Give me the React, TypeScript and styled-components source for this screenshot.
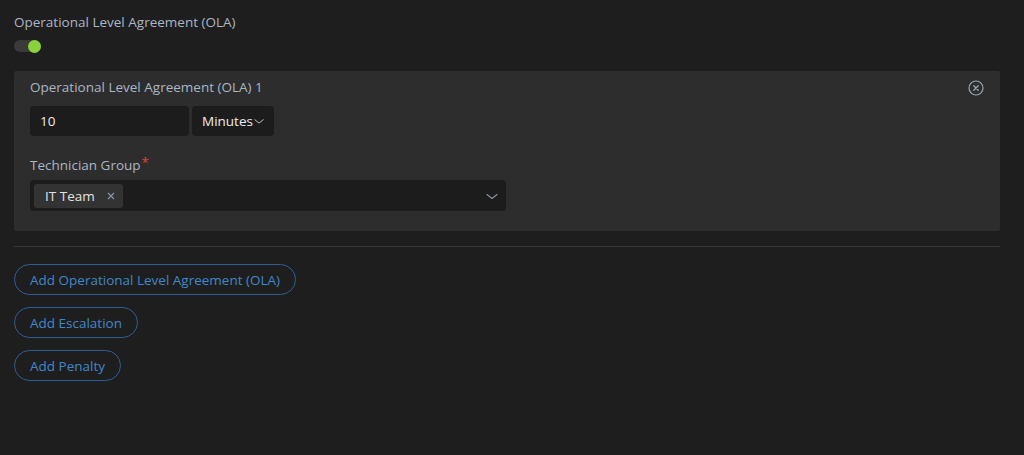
import React from 'react'
import styled, { createGlobalStyle } from 'styled-components'

const GlobalStyle = createGlobalStyle`
  html, body {
    margin: 0;
    padding: 0;
    background: #1e1e1e;
  }
  body {
    font-family: "Open Sans", "Liberation Sans", sans-serif;
    font-size: 13.5px;
  }
`

const Page = styled.div`
  width: 1024px;
  height: 455px;
  box-sizing: border-box;
  padding: 13px 24px 0 14px;
  background: #1e1e1e;
  display: flex;
  flex-direction: column;
`

const Label = styled.div`
  color: #aab6c6;
  font-size: 13.5px;
  line-height: 19px;
`

const Toggle = styled.div<{ on?: boolean }>`
  margin-top: 8px;
  width: 27px;
  height: 12px;
  border-radius: 7px;
  background: #3a3a3a;
  position: relative;
  &::after {
    content: '';
    position: absolute;
    top: -0.5px;
    right: 0;
    width: 13px;
    height: 13px;
    border-radius: 50%;
    background: #8bd13c;
  }
`

const Panel = styled.div`
  margin-top: 19px;
  background: #2d2d2d;
  border-radius: 2px;
  padding: 7px 16px 20px 16px;
  display: flex;
  flex-direction: column;
  position: relative;
`

const CloseButton = styled.button`
  position: absolute;
  top: 8px;
  right: 15px;
  width: 18px;
  height: 18px;
  padding: 0;
  border: none;
  background: transparent;
  display: flex;
  align-items: center;
  justify-content: center;
`

const Row = styled.div`
  display: flex;
  gap: 3px;
  margin-top: 9px;
`

const Field = styled.div<{ width: number }>`
  width: ${p => p.width}px;
  height: 30px;
  box-sizing: border-box;
  background: #1c1c1c;
  border-radius: 4px;
  display: flex;
  align-items: center;
  padding: 0 10px;
  color: #ececec;
  font-size: 13.5px;
  gap: 1px;
`

const FieldGroup = styled.div`
  margin-top: 20px;
  display: flex;
  flex-direction: column;
`

const Required = styled.span`
  color: #e0443a;
  margin-left: 1px;
  position: relative;
  top: -3px;
`

const MultiSelect = styled.div`
  margin-top: 5px;
  width: 476px;
  height: 31px;
  box-sizing: border-box;
  background: #1c1c1c;
  border-radius: 4px;
  display: flex;
  align-items: center;
  padding: 0 8px 0 4px;
  justify-content: space-between;
`

const Tag = styled.div`
  height: 24px;
  box-sizing: border-box;
  background: #333333;
  border-radius: 3px;
  display: flex;
  align-items: center;
  padding: 0 8px 0 11px;
  gap: 12px;
  color: #e2e2e2;
  font-size: 13.5px;
`

const Divider = styled.hr`
  margin: 15px 0 17px 0;
  border: none;
  border-top: 1px solid #363636;
  width: 986px;
`

const Actions = styled.div`
  display: flex;
  flex-direction: column;
  align-items: flex-start;
  gap: 12px;
`

const OutlineButton = styled.button`
  height: 31px;
  box-sizing: border-box;
  border: 1px solid #2d5f96;
  border-radius: 16px;
  background: transparent;
  color: #3f88cc;
  font-family: inherit;
  font-size: 13.5px;
  padding: 0 15px;
  cursor: pointer;
`

const Chevron = ({ size = 12, color = '#cfcfcf' }: { size?: number; color?: string }) => (
  <svg width={size} height={size} viewBox="0 0 12 12" fill="none">
    <path d="M1 4.5 L6 8.5 L11 4.5" stroke={color} strokeWidth="1.1" strokeLinecap="round" strokeLinejoin="round" />
  </svg>
)

const App = () => {
  return (
    <Page>
      <GlobalStyle />
      <Label>Operational Level Agreement (OLA)</Label>
      <Toggle on />
      <Panel>
        <CloseButton aria-label="remove">
          <svg width="16" height="16" viewBox="0 0 16 16" fill="none">
            <circle cx="8" cy="8" r="7" stroke="#9aa6b4" strokeWidth="1.2" />
            <path d="M5.8 5.8 L10.2 10.2 M10.2 5.8 L5.8 10.2" stroke="#9aa6b4" strokeWidth="1.4" strokeLinecap="round" />
          </svg>
        </CloseButton>
        <Label>Operational Level Agreement (OLA) 1</Label>
        <Row>
          <Field width={159}>10</Field>
          <Field width={82}>
            Minutes
            <Chevron />
          </Field>
        </Row>
        <FieldGroup>
          <Label>
            Technician Group<Required>*</Required>
          </Label>
          <MultiSelect>
            <Tag>
              IT Team
              <svg width="8" height="8" viewBox="0 0 8 8">
                <path d="M1 1 L7 7 M7 1 L1 7" stroke="#8a95a3" strokeWidth="1.2" />
              </svg>
            </Tag>
            <Chevron color="#8a95a3" />
          </MultiSelect>
        </FieldGroup>
      </Panel>
      <Divider />
      <Actions>
        <OutlineButton>Add Operational Level Agreement (OLA)</OutlineButton>
        <OutlineButton>Add Escalation</OutlineButton>
        <OutlineButton>Add Penalty</OutlineButton>
      </Actions>
    </Page>
  )
}

export default App
